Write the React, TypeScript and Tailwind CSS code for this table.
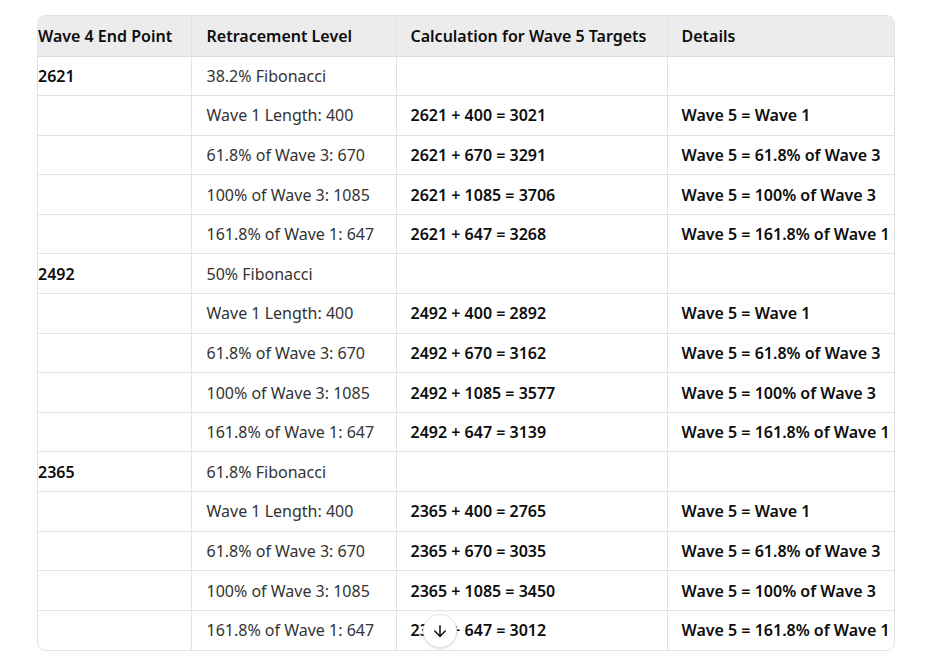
import React from 'react';
import { ArrowDown } from 'lucide-react';

type Row = { point?: string; level: string; calc?: string; details?: string };

const groups: { point: string; level: string; base: number }[] = [
  { point: '2621', level: '38.2% Fibonacci', base: 2621 },
  { point: '2492', level: '50% Fibonacci', base: 2492 },
  { point: '2365', level: '61.8% Fibonacci', base: 2365 },
];

const targets = [
  { label: 'Wave 1 Length: 400', add: 400, details: 'Wave 5 = Wave 1' },
  { label: '61.8% of Wave 3: 670', add: 670, details: 'Wave 5 = 61.8% of Wave 3' },
  { label: '100% of Wave 3: 1085', add: 1085, details: 'Wave 5 = 100% of Wave 3' },
  { label: '161.8% of Wave 1: 647', add: 647, details: 'Wave 5 = 161.8% of Wave 1' },
];

const rows: Row[] = groups.flatMap(g => [
  { point: g.point, level: g.level },
  ...targets.map(t => ({
    level: t.label,
    calc: `${g.base} + ${t.add} = ${g.base + t.add}`,
    details: t.details,
  })),
]);

const App: React.FC = () => {
  return (
    <div
      className="w-[940px] h-[672px] bg-white relative overflow-hidden text-[16px] text-[#0d0d0d]"
      style={{ fontFamily: '"Segoe UI", "Noto Sans", sans-serif' }}
    >
      <div className="pt-[15px] pl-[37px]">
        <div className="w-[858px] border border-[#e3e3e3] rounded-lg overflow-hidden">
          <table className="w-full border-collapse table-fixed whitespace-nowrap leading-[24px]">
            <colgroup>
              <col className="w-[153px]" />
              <col className="w-[205px]" />
              <col className="w-[271px]" />
              <col />
            </colgroup>
            <thead>
              <tr className="bg-[#ececec] h-[40px] border-b border-[#dcdcdc]">
                <th className="text-left font-semibold pl-0 pr-4 py-0">Wave 4 End Point</th>
                <th className="text-left font-semibold px-[15px] py-0 border-l border-[#e3e3e3]">Retracement Level</th>
                <th className="text-left font-semibold px-[14px] py-0 border-l border-[#e3e3e3]">Calculation for Wave 5 Targets</th>
                <th className="text-left font-semibold pl-[14px] pr-0 py-0 border-l border-[#e3e3e3]">Details</th>
              </tr>
            </thead>
            <tbody>
              {rows.map((r, i) => (
                <tr key={i} className="h-[39.6px] border-t border-[#e3e3e3]">
                  <td className="pl-0 pr-4 py-0 font-semibold">{r.point}</td>
                  <td className="px-[15px] py-0 text-[#333333] border-l border-[#e3e3e3]">{r.level}</td>
                  <td className="px-[14px] py-0 font-semibold border-l border-[#e3e3e3]">{r.calc}</td>
                  <td className="pl-[14px] pr-0 py-0 font-semibold border-l border-[#e3e3e3]">{r.details}</td>
                </tr>
              ))}
            </tbody>
          </table>
        </div>
      </div>
      <button className="absolute left-[423px] top-[614px] w-[34px] h-[34px] rounded-full bg-white border border-[#e5e5e5] shadow-sm flex items-center justify-center">
        <ArrowDown size={18} strokeWidth={2} className="text-[#0d0d0d]" />
      </button>
    </div>
  );
};

export default App;
